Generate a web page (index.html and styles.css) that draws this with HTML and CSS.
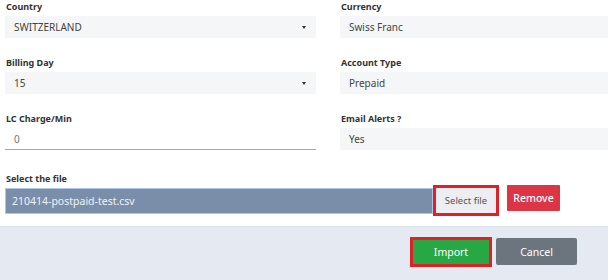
FILE: index.html
```html
<!DOCTYPE html>
<html>
<head>
<meta charset="utf-8">
<link rel="stylesheet" href="styles.css">
</head>
<body>
<div class="page">
  <div class="form">
    <div class="grid">
      <div class="field">
        <label class="lbl">Country</label>
        <div class="box select"><span>SWITZERLAND</span><span class="caret"></span></div>
      </div>
      <div class="field">
        <label class="lbl">Currency</label>
        <div class="box"><span>Swiss Franc</span></div>
      </div>
      <div class="field">
        <label class="lbl">Billing Day</label>
        <div class="box select"><span>15</span><span class="caret"></span></div>
      </div>
      <div class="field">
        <label class="lbl">Account Type</label>
        <div class="box"><span>Prepaid</span></div>
      </div>
      <div class="field">
        <label class="lbl">LC Charge/Min</label>
        <div class="box input"><span>0</span></div>
      </div>
      <div class="field">
        <label class="lbl">Email Alerts ?</label>
        <div class="box"><span>Yes</span></div>
      </div>
    </div>
    <div class="filefield">
      <label class="lbl">Select the file</label>
      <div class="filerow">
        <div class="fileinput">210414-postpaid-test.csv</div>
        <div class="selbtn">Select file</div>
        <div class="removebtn">Remove</div>
      </div>
    </div>
  </div>
  <div class="footer">
    <div class="btn import">Import</div>
    <div class="btn cancel">Cancel</div>
  </div>
</div>
</body>
</html>
```
FILE: styles.css
```css
html, body {
  margin: 0;
  padding: 0;
  background: #ffffff;
  overflow: hidden;
}
body {
  font-family: "Noto Sans", "DejaVu Sans", sans-serif;
  width: 608px;
  height: 280px;
}
.page {
  width: 608px;
  height: 280px;
  display: flex;
  flex-direction: column;
}
.form {
  padding: 1px 0 0 5px;
  height: 226px;
  box-sizing: border-box;
}
.grid {
  display: grid;
  grid-template-columns: 311px 280px;
  column-gap: 24px;
  row-gap: 19px;
}
.field {
  display: flex;
  flex-direction: column;
}
.lbl {
  font-size: 9px;
  font-weight: bold;
  color: #333333;
  height: 15px;
  line-height: 11px;
  padding-left: 1px;
}
.box {
  height: 22px;
  background: #f5f6f8;
  display: flex;
  align-items: center;
  justify-content: space-between;
  padding: 0 10px 0 9px;
  font-size: 10px;
  color: #444444;
  box-sizing: border-box;
}
.box.input {
  border-bottom: 1.5px solid #8eaed3;
  background: #ffffff;
  color: #777;
}
.caret {
  width: 0;
  height: 0;
  border-left: 2.5px solid transparent;
  border-right: 2.5px solid transparent;
  border-top: 3px solid #333;
}
.filefield {
  margin-top: 15px;
}
.filefield .lbl {
  height: 13px;
}
.filerow {
  display: flex;
  align-items: flex-start;
}
.fileinput {
  margin-top: 1px;
  width: 428px;
  height: 26px;
  box-sizing: border-box;
  background: #7a8ea9;
  border: 1px solid #aac6ea;
  color: #eef2f7;
  font-size: 10.5px;
  display: flex;
  align-items: center;
  padding-left: 6px;
}
.selbtn {
  margin-top: -2px;
  width: 66px;
  height: 31px;
  box-sizing: border-box;
  border: 3px solid #e01f26;
  background: #eceef1;
  color: #555;
  font-size: 9.5px;
  display: flex;
  align-items: center;
  justify-content: center;
}
.removebtn {
  margin-left: 8px;
  margin-top: -2px;
  width: 53px;
  height: 26px;
  background: #dc3545;
  color: #ffffff;
  font-size: 10.5px;
  font-weight: 500;
  display: flex;
  align-items: center;
  justify-content: center;
  border-radius: 1px;
}
.footer {
  flex: 1;
  background: #e4e9f2;
  border-top: 1px solid #dde2ea;
  display: flex;
  justify-content: flex-end;
  align-items: flex-start;
  padding: 10px 31px 0 0;
  gap: 4px;
}
.btn {
  height: 30px;
  box-sizing: border-box;
  display: flex;
  align-items: center;
  justify-content: center;
  font-size: 10.5px;
  color: #ffffff;
}
.import {
  width: 82px;
  background: #28a745;
  border: 3px solid #e01f26;
}
.cancel {
  margin-top: 1px;
  width: 81px;
  height: 27px;
  background: #6c757d;
  border-radius: 2px;
}
```
